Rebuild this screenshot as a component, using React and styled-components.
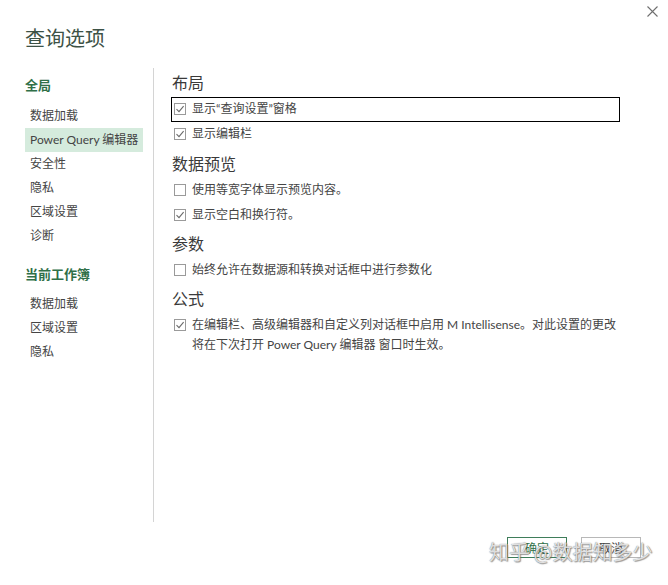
import React, { useState } from "react";
import styled, { createGlobalStyle } from "styled-components";

const colors = {
  text: "#444444",
  heading: "#3a3a3a",
  green: "#2f6f48",
  title: "#3d5246",
  highlight: "#d5ebdd",
  divider: "#d4d4d4",
  box: "#9a9a9a",
};

const GlobalStyle = createGlobalStyle`
  html, body {
    margin: 0;
    padding: 0;
    background: #ffffff;
  }
  body {
    font-family: "Segoe UI", Lato, "Noto Sans CJK SC", sans-serif;
    color: ${colors.text};
  }
`;

const Dialog = styled.div`
  position: relative;
  width: 668px;
  height: 585px;
  display: flex;
  flex-direction: column;
  box-sizing: border-box;
  overflow: hidden;
`;

const Header = styled.div`
  height: 68px;
  display: flex;
  justify-content: space-between;
  align-items: flex-start;
  padding: 0 9px 0 25px;
  box-sizing: border-box;
`;

const Title = styled.h1`
  margin: 26px 0 0;
  font-size: 20px;
  line-height: 24px;
  font-weight: 400;
  color: ${colors.title};
  font-family: "Noto Sans CJK SC", sans-serif;
`;

const CloseButton = styled.button`
  margin-top: 4px;
  width: 14px;
  height: 14px;
  padding: 0;
  border: none;
  background: transparent;
  display: flex;
  align-items: center;
  justify-content: center;
  cursor: pointer;
`;

const Body = styled.div`
  display: flex;
  height: 454px;
`;

const Sidebar = styled.nav`
  width: 154px;
  box-sizing: border-box;
  border-right: 1px solid ${colors.divider};
  padding: 5px 10px 0 25px;
  display: flex;
  flex-direction: column;
`;

const GroupTitle = styled.div`
  font-family: "Noto Sans CJK SC", sans-serif;
  font-size: 13px;
  font-weight: 700;
  line-height: 24px;
  color: ${colors.green};
  margin: ${(p) => (p.$first ? "0 0 7px" : "14px 0 6px")};
`;

const NavItem = styled.div`
  height: 24px;
  line-height: 24px;
  padding-left: 5px;
  font-size: 12px;
  color: ${colors.text};
  background: ${(p) => (p.$active ? colors.highlight : "transparent")};
  white-space: nowrap;
  cursor: pointer;
`;

const Content = styled.section`
  flex: 1;
  padding: 2px 48px 0 18px;
  display: flex;
  flex-direction: column;
`;

const SectionTitle = styled.h2`
  margin: ${(p) => p.$gap} 0 3px;
  font-size: 16px;
  line-height: 24px;
  font-weight: 400;
  color: ${colors.heading};
  font-family: "Noto Sans CJK SC", sans-serif;
`;

const OptionRow = styled.label`
  display: flex;
  align-items: flex-start;
  gap: 6px;
  margin-left: -1px;
  padding: 1px 0 2px 2px;
  border: 1px solid ${(p) => (p.$focused ? "#000000" : "transparent")};
  font-size: 12px;
  line-height: 20px;
  color: ${colors.text};
  cursor: pointer;
`;

const Box = styled.span`
  flex: none;
  width: 12px;
  height: 12px;
  margin-top: 4px;
  border: 1px solid ${colors.box};
  box-sizing: border-box;
  display: flex;
  align-items: center;
  justify-content: center;
  background: #fff;
`;

const Lines = styled.span`
  display: flex;
  flex-direction: column;
  white-space: nowrap;
`;

const Footer = styled.div`
  display: flex;
  justify-content: flex-end;
  gap: 14px;
  padding: 15px 27px 0 0;
`;

const Button = styled.button`
  width: 60px;
  height: 21px;
  padding: 0;
  background: #ffffff;
  border: 1px solid ${(p) => (p.$primary ? "#3f7d5a" : "#b8b8b8")};
  color: ${(p) => (p.$primary ? colors.green : colors.text)};
  font-family: "Noto Sans CJK SC", sans-serif;
  font-size: 12px;
  line-height: 19px;
  cursor: pointer;
`;

const Watermark = styled.div`
  position: absolute;
  left: 489px;
  top: 538px;
  font-family: "Noto Sans CJK SC", sans-serif;
  font-size: 20px;
  line-height: 28px;
  color: rgba(255, 255, 255, 0.8);
  text-shadow: 0 0 1px rgba(60, 60, 60, 0.8), 1px 1px 1px rgba(100, 100, 100, 0.6);
  pointer-events: none;
  white-space: nowrap;
`;

const CheckMark = () => (
  <svg width="10" height="10" viewBox="0 0 10 10">
    <path d="M1.5 5.2 L4 7.6 L8.6 2.2" fill="none" stroke="#6a6a6a" strokeWidth="1.1" />
  </svg>
);

const CloseIcon = () => (
  <svg width="11" height="11" viewBox="0 0 11 11">
    <path d="M0.5 0.5 L10.5 10.5 M10.5 0.5 L0.5 10.5" stroke="#6f6f6f" strokeWidth="1.1" />
  </svg>
);

const Option = ({ checked, focused, lines }) => (
  <OptionRow $focused={focused}>
    <Box>{checked && <CheckMark />}</Box>
    <Lines>
      {lines.map((l) => (
        <span key={l}>{l}</span>
      ))}
    </Lines>
  </OptionRow>
);

const globalItems = ["数据加载", "Power Query 编辑器", "安全性", "隐私", "区域设置", "诊断"];
const workbookItems = ["数据加载", "区域设置", "隐私"];

const sections = [
  {
    title: "布局",
    gap: "0",
    options: [
      { lines: ["显示“查询设置”窗格"], checked: true, focused: true },
      { lines: ["显示编辑栏"], checked: true },
    ],
  },
  {
    title: "数据预览",
    gap: "4px",
    options: [
      { lines: ["使用等宽字体显示预览内容。"], checked: false },
      { lines: ["显示空白和换行符。"], checked: true },
    ],
  },
  {
    title: "参数",
    gap: "3px",
    options: [{ lines: ["始终允许在数据源和转换对话框中进行参数化"], checked: false }],
  },
  {
    title: "公式",
    gap: "3px",
    options: [
      {
        lines: [
          "在编辑栏、高级编辑器和自定义列对话框中启用 M Intellisense。对此设置的更改",
          "将在下次打开 Power Query 编辑器 窗口时生效。",
        ],
        checked: true,
      },
    ],
  },
];

const App = () => {
  const [active, setActive] = useState("g-1");

  return (
    <>
      <GlobalStyle />
      <Dialog>
        <Header>
          <Title>查询选项</Title>
          <CloseButton aria-label="关闭">
            <CloseIcon />
          </CloseButton>
        </Header>
        <Body>
          <Sidebar>
            <GroupTitle $first>全局</GroupTitle>
            {globalItems.map((item, i) => (
              <NavItem
                key={"g-" + i}
                $active={active === "g-" + i}
                onClick={() => setActive("g-" + i)}
              >
                {item}
              </NavItem>
            ))}
            <GroupTitle>当前工作簿</GroupTitle>
            {workbookItems.map((item, i) => (
              <NavItem
                key={"w-" + i}
                $active={active === "w-" + i}
                onClick={() => setActive("w-" + i)}
              >
                {item}
              </NavItem>
            ))}
          </Sidebar>
          <Content>
            {sections.map((s) => (
              <React.Fragment key={s.title}>
                <SectionTitle $gap={s.gap}>{s.title}</SectionTitle>
                {s.options.map((o) => (
                  <Option key={o.lines[0]} {...o} />
                ))}
              </React.Fragment>
            ))}
          </Content>
        </Body>
        <Footer>
          <Button $primary>确定</Button>
          <Button>取消</Button>
        </Footer>
        <Watermark>知乎 @数据知多少</Watermark>
      </Dialog>
    </>
  );
};

export default App;
